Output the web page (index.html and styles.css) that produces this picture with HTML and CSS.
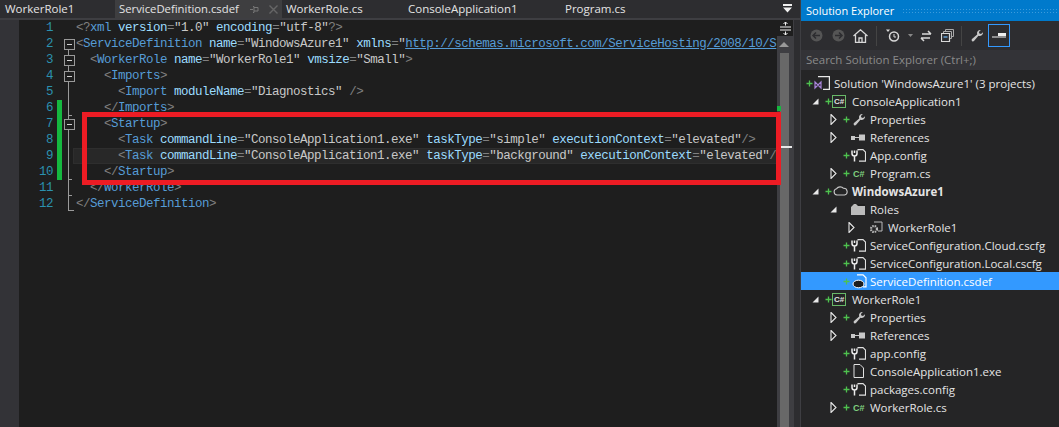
FILE: index.html
```html
<!DOCTYPE html>
<html lang="en">
<head>
<meta charset="utf-8">
<title>Solution Explorer</title>
<link rel="stylesheet" href="styles.css">
</head>
<body>
<svg class="defs" width="0" height="0" aria-hidden="true">
  <defs>
    <symbol id="plus" viewBox="0 0 7 7"><path d="M3.500 0.500v6M0.500 3.500h6" stroke="#4ec24e" stroke-width="1.300" fill="none"/></symbol>
    <symbol id="open" viewBox="0 0 7 7"><path d="M6.500 0.500v6h-6z" fill="#e8e8e8"/></symbol>
    <symbol id="closed" viewBox="0 0 7 11"><path d="M1 0.500l5 5-5 5z" fill="#1e1e1e" stroke="#e8e8e8" stroke-width="1.100"/></symbol>
    <symbol id="wrench" viewBox="0 0 13 13"><path d="M12 3.200a3.400 3.400 0 0 1-4.600 3.600L3 12a1.400 1.400 0 0 1-2-2l5.200-4.400A3.400 3.400 0 0 1 9.800 1L7.900 3l.5 1.600 1.600.5z" fill="#c8c8c8"/></symbol>
    <symbol id="refs" viewBox="0 0 14 7"><path d="M0 2h4v4H0zM8 .5h6v6H8z" fill="#c8c8c8"/><path d="M4 3.500h4" stroke="#c8c8c8"/></symbol>
    <symbol id="cfg" viewBox="0 0 15 13"><path d="M7 1.600V.600h5l2.500 2.500v9H8" fill="none" stroke="#e0e0e0" stroke-width="1.100"/><path d="M1 1.500v3a2.500 2.500 0 0 0 5 0v-3M3.500 7v5.500M3.500 1.500v2.500" fill="none" stroke="#ececec" stroke-width="1.500"/></symbol>
    <symbol id="cs" viewBox="0 0 15 10"><text x="0" y="8.500" font-family="Liberation Sans,sans-serif" font-size="9" font-weight="700" fill="#7fd07f">C#</text></symbol>
    <symbol id="file" viewBox="0 0 11 14"><path d="M1 .5h6l3.500 3.500v9.500H1z" fill="none" stroke="#e0e0e0"/></symbol>
    <symbol id="cloud" viewBox="0 0 15 10"><path d="M4 9a3.200 3.200 0 0 1-.4-6.300A4.500 4.500 0 0 1 10.500 2.300 3.400 3.400 0 0 1 11.500 9z" fill="none" stroke="#c8c8c8" stroke-width="1.100"/></symbol>
  </defs>
</svg>
<div class="app">
  <main class="doc">
    <div class="tabs">
      <span class="tab tab-a">WorkerRole1</span>
      <span class="tab tab-active"><span class="tab-name">ServiceDefinition.csdef</span>
        <svg class="pin" width="9" height="9" viewBox="0 0 9 9"><path d="M0 4.500h3M3 1.500h1v6H3M4 2.500h4v3.500H4" fill="none" stroke="#777"/></svg>
        <svg class="close" width="9" height="9" viewBox="0 0 9 9"><path d="M.5.500l8 8M8.500.500l-8 8" stroke="#666" stroke-width="1.400"/></svg>
      </span>
      <span class="tab tab-c">WorkerRole.cs</span>
      <span class="tab tab-d">ConsoleApplication1</span>
      <span class="tab tab-e">Program.cs</span>
      <svg class="overflow" width="9" height="9" viewBox="0 0 9 9"><path d="M0 0h9v2H0zM0 3.500h9L4.500 8.500z" fill="#f0f0f0"/></svg>
    </div>
    <div class="body">
      <div class="editor">
        <div class="rows">
          <div class="row"><span class="num">1</span><span class="bar"></span><span class="fold"></span><code class="code"><i class="p">&lt;?</i><i class="n">xml</i> <i class="a">version</i><i class="p">=</i><i class="v">"1.0"</i> <i class="a">encoding</i><i class="p">=</i><i class="v">"utf-8"</i><i class="p">?&gt;</i></code></div>
          <div class="row"><span class="num">2</span><span class="bar"></span><span class="fold f-box f-down"></span><code class="code"><i class="p">&lt;</i><i class="n">ServiceDefinition</i> <i class="a">name</i><i class="p">=</i><i class="v">"WindowsAzure1"</i> <i class="a">xmlns</i><i class="p">=</i><i class="v">"</i><i class="l">http://schemas.microsoft.com/ServiceHosting/2008/10/S</i></code></div>
          <div class="row"><span class="num">3</span><span class="bar"></span><span class="fold f-box f-line"></span><code class="code">  <i class="p">&lt;</i><i class="n">WorkerRole</i> <i class="a">name</i><i class="p">=</i><i class="v">"WorkerRole1"</i> <i class="a">vmsize</i><i class="p">=</i><i class="v">"Small"</i><i class="p">&gt;</i></code></div>
          <div class="row"><span class="num">4</span><span class="bar"></span><span class="fold f-box f-line"></span><code class="code">    <i class="p">&lt;</i><i class="n">Imports</i><i class="p">&gt;</i></code></div>
          <div class="row"><span class="num">5</span><span class="bar"></span><span class="fold f-line"></span><code class="code">      <i class="p">&lt;</i><i class="n">Import</i> <i class="a">moduleName</i><i class="p">=</i><i class="v">"Diagnostics"</i> <i class="p">/&gt;</i></code></div>
          <div class="row"><span class="num">6</span><span class="bar on"></span><span class="fold f-line f-tick"></span><code class="code">    <i class="p">&lt;/</i><i class="n">Imports</i><i class="p">&gt;</i></code></div>
          <div class="row"><span class="num">7</span><span class="bar on"></span><span class="fold f-box f-line"></span><code class="code">    <i class="p">&lt;</i><i class="n">Startup</i><i class="p">&gt;</i></code></div>
          <div class="row"><span class="num">8</span><span class="bar on"></span><span class="fold f-line"></span><code class="code">      <i class="p">&lt;</i><i class="n">Task</i> <i class="a">commandLine</i><i class="p">=</i><i class="v">"ConsoleApplication1.exe"</i> <i class="a">taskType</i><i class="p">=</i><i class="v">"simple"</i> <i class="a">executionContext</i><i class="p">=</i><i class="v">"elevated"</i><i class="p">/&gt;</i></code></div>
          <div class="row"><span class="num">9</span><span class="bar on"></span><span class="fold f-line"></span><code class="code current">      <i class="p">&lt;</i><i class="n">Task</i> <i class="a">commandLine</i><i class="p">=</i><i class="v">"ConsoleApplication1.exe"</i> <i class="a">taskType</i><i class="p">=</i><i class="v">"background"</i> <i class="a">executionContext</i><i class="p">=</i><i class="v">"elevated"</i><i class="p">/</i></code></div>
          <div class="row"><span class="num">10</span><span class="bar on"></span><span class="fold f-line f-tick"></span><code class="code">    <i class="p">&lt;/</i><i class="n">Startup</i><i class="p">&gt;</i></code></div>
          <div class="row"><span class="num">11</span><span class="bar"></span><span class="fold f-line f-tick"></span><code class="code">  <i class="p">&lt;/</i><i class="n">WorkerRole</i><i class="p">&gt;</i></code></div>
          <div class="row"><span class="num">12</span><span class="bar"></span><span class="fold f-end"></span><code class="code"><i class="p">&lt;/</i><i class="n">ServiceDefinition</i><i class="p">&gt;</i></code></div>
        </div>
        <div class="callout"></div>
      </div>
      <div class="scroll">
        <div class="split"><svg width="11" height="13" viewBox="0 0 11 13"><path d="M5.500 0v3.500M5.500 9.500V13M0 5h11M0 8h11M3.500 2L5.500 0l2 2M3.500 11l2 2 2-2" fill="none" stroke="#f0f0f0"/></svg></div>
        <div class="arrow"></div>
        <div class="thumb"><span class="mark-green"></span><span class="mark-white"></span></div>
      </div>
    </div>
  </main>
  <div class="gutter"></div>
  <aside class="side">
    <header class="title"><span>Solution Explorer</span><span class="grip"></span></header>
    <div class="tools">
      <svg class="t-back" width="13" height="13" viewBox="0 0 13 13"><circle cx="6.500" cy="6.500" r="6" fill="#555"/><path d="M10 6.500H3.500M6 3.500l-3 3 3 3" fill="none" stroke="#2d2d30" stroke-width="1.500"/></svg>
      <svg class="t-fwd" width="13" height="13" viewBox="0 0 13 13"><circle cx="6.500" cy="6.500" r="6" fill="#555"/><path d="M3 6.500h6.500M7 3.500l3 3-3 3" fill="none" stroke="#2d2d30" stroke-width="1.500"/></svg>
      <svg class="t-home" width="15" height="14" viewBox="0 0 15 14"><path d="M.5 7L7.500 .8 14.500 7M2.500 6v7.500h10V6M6 13.500V9h3v4.500" fill="none" stroke="#d8d8d8" stroke-width="1.300"/></svg>
      <span class="t-sep"></span>
      <svg class="t-hist" width="14" height="13" viewBox="0 0 14 13"><path d="M0 .5h4L2 3z" fill="#d8d8d8"/><circle cx="8" cy="7.500" r="4.500" fill="none" stroke="#d8d8d8" stroke-width="1.500"/><path d="M8 5v3h2" fill="none" stroke="#d8d8d8"/></svg>
      <svg class="t-drop" width="5" height="3" viewBox="0 0 5 3"><path d="M0 0h5L2.500 3z" fill="#888"/></svg>
      <svg class="t-sync" width="12" height="12" viewBox="0 0 12 12"><path d="M2 4h9M8 1l3 3M10 8H1M4 11L1 8" fill="none" stroke="#d8d8d8" stroke-width="1.500"/></svg>
      <svg class="t-copy" width="13" height="13" viewBox="0 0 13 13"><path d="M.500 4.500h8v8h-8z" fill="none" stroke="#d8d8d8" stroke-width="1.200"/><path d="M2.500 4V2.500h8v7H9M4.500 2V.500h8v7H11" fill="none" stroke="#aaa"/><path d="M2.500 8h4" stroke="#6cb4ee" stroke-width="1.300"/></svg>
      <span class="t-sep t-sep2"></span>
      <svg class="t-wrench" width="13" height="13"><use href="#wrench"/></svg>
      <span class="t-pin"><svg width="14" height="5" viewBox="0 0 14 5"><path d="M0 4h14" stroke="#eee"/><path d="M6 0h8v3H6z" fill="#eee"/></svg></span>
    </div>
    <div class="search">Search Solution Explorer (Ctrl+;)</div>
    <ul class="tree">
      <li class="node lv0"><svg class="pl" width="7" height="7"><use href="#plus"/></svg><span class="slot"><svg width="16" height="14" viewBox="0 0 16 14"><path d="M4 .6h11.400v12.800H9" fill="none" stroke="#e8e8e8" stroke-width="1.200"/><path d="M1 6l3 3 3-3v6l-3-3-3 3z" fill="none" stroke="#a884d8" stroke-width="1.200"/></svg></span><span>Solution 'WindowsAzure1' (3 projects)</span></li>
      <li class="node lv1"><svg class="exp" width="7" height="7"><use href="#open"/></svg><svg class="pl" width="7" height="7"><use href="#plus"/></svg><span class="slot"><span class="proj">C#</span></span><span>ConsoleApplication1</span></li>
      <li class="node lv2"><svg class="exp" width="7" height="11"><use href="#closed"/></svg><svg class="pl" width="7" height="7"><use href="#plus"/></svg><span class="slot in2"><svg width="13" height="13"><use href="#wrench"/></svg></span><span>Properties</span></li>
      <li class="node lv2"><svg class="exp" width="7" height="11"><use href="#closed"/></svg><span class="pl"></span><span class="slot in1"><svg width="14" height="7"><use href="#refs"/></svg></span><span>References</span></li>
      <li class="node lv2"><span class="exp"></span><svg class="pl" width="7" height="7"><use href="#plus"/></svg><span class="slot in1"><svg width="15" height="13"><use href="#cfg"/></svg></span><span>App.config</span></li>
      <li class="node lv2"><svg class="exp" width="7" height="11"><use href="#closed"/></svg><svg class="pl" width="7" height="7"><use href="#plus"/></svg><span class="slot in2"><svg width="15" height="10"><use href="#cs"/></svg></span><span>Program.cs</span></li>
      <li class="node lv1"><svg class="exp" width="7" height="7"><use href="#open"/></svg><svg class="pl" width="7" height="7"><use href="#plus"/></svg><span class="slot in1"><svg width="15" height="10"><use href="#cloud"/></svg></span><b>WindowsAzure1</b></li>
      <li class="node lv2"><svg class="exp" width="7" height="7"><use href="#open"/></svg><span class="pl"></span><span class="slot in1"><svg width="14" height="12" viewBox="0 0 14 12"><path d="M0 4l3-3h4v2h7v9H0z" fill="#bbb"/><path d="M5 1h9v2H7z" fill="#1e1e1e"/></svg></span><span>Roles</span></li>
      <li class="node lv3"><svg class="exp" width="7" height="11"><use href="#closed"/></svg><span class="pl"></span><span class="slot in1"><svg width="14" height="13" viewBox="0 0 14 13"><path d="M5 1h8v9H9" fill="none" stroke="#bbb"/><circle cx="5" cy="8" r="3" fill="none" stroke="#bbb" stroke-width="2.200" stroke-dasharray="1.500 .9"/></svg></span><span>WorkerRole1</span></li>
      <li class="node lv2"><span class="exp"></span><svg class="pl" width="7" height="7"><use href="#plus"/></svg><span class="slot in1"><svg width="15" height="13"><use href="#cfg"/></svg></span><span>ServiceConfiguration.Cloud.cscfg</span></li>
      <li class="node lv2"><span class="exp"></span><svg class="pl" width="7" height="7"><use href="#plus"/></svg><span class="slot in1"><svg width="15" height="13"><use href="#cfg"/></svg></span><span>ServiceConfiguration.Local.cscfg</span></li>
      <li class="node lv2 selected"><span class="exp"></span><svg class="pl" width="7" height="7"><use href="#plus"/></svg><span class="slot in1"><svg width="16" height="15" viewBox="0 0 16 15"><path d="M6 .8h6l3 3v9h-3" fill="none" stroke="#fff" stroke-width="1.200"/><ellipse cx="7.500" cy="10" rx="5.500" ry="3.800" fill="#1e1e1e" stroke="#fff"/></svg></span><span>ServiceDefinition.csdef</span></li>
      <li class="node lv1"><svg class="exp" width="7" height="7"><use href="#open"/></svg><svg class="pl" width="7" height="7"><use href="#plus"/></svg><span class="slot"><span class="proj">C#</span></span><span>WorkerRole1</span></li>
      <li class="node lv2"><svg class="exp" width="7" height="11"><use href="#closed"/></svg><svg class="pl" width="7" height="7"><use href="#plus"/></svg><span class="slot in2"><svg width="13" height="13"><use href="#wrench"/></svg></span><span>Properties</span></li>
      <li class="node lv2"><svg class="exp" width="7" height="11"><use href="#closed"/></svg><span class="pl"></span><span class="slot in1"><svg width="14" height="7"><use href="#refs"/></svg></span><span>References</span></li>
      <li class="node lv2"><span class="exp"></span><svg class="pl" width="7" height="7"><use href="#plus"/></svg><span class="slot in1"><svg width="15" height="13"><use href="#cfg"/></svg></span><span>app.config</span></li>
      <li class="node lv2"><span class="exp"></span><svg class="pl" width="7" height="7"><use href="#plus"/></svg><span class="slot in2"><svg width="11" height="14"><use href="#file"/></svg></span><span>ConsoleApplication1.exe</span></li>
      <li class="node lv2"><span class="exp"></span><svg class="pl" width="7" height="7"><use href="#plus"/></svg><span class="slot in1"><svg width="15" height="13"><use href="#cfg"/></svg></span><span>packages.config</span></li>
      <li class="node lv2"><svg class="exp" width="7" height="11"><use href="#closed"/></svg><svg class="pl" width="7" height="7"><use href="#plus"/></svg><span class="slot in2"><svg width="15" height="10"><use href="#cs"/></svg></span><span>WorkerRole.cs</span></li>
    </ul>
  </aside>
</div>
</body>
</html>
```
FILE: styles.css
```css
* { box-sizing: border-box; }
html, body { margin: 0; height: 100%; overflow: hidden; background: #2d2d30; }
.defs { position: absolute; }
.app {
  display: flex;
  width: 1059px;
  height: 427px;
  font-family: "Open Sans", "Noto Sans", sans-serif;
  font-size: 11.5px;
  color: #e4e4e4;
}
.doc { width: 800px; display: flex; flex-direction: column; flex: none; }
.tabs {
  height: 18px;
  flex: none;
  display: flex;
  align-items: center;
  position: relative;
  background: #2d2d30;
}
.tab { height: 18px; line-height: 18px; flex: none; white-space: nowrap; }
.tab-a { width: 115px; padding-left: 5px; }
.tab-active {
  width: 167px;
  padding-left: 4px;
  background: #3e3e40;
  display: flex;
  align-items: center;
}
.tab-name { width: 131px; font-size: 11.3px; }
.close { margin-left: 10px; }
.tab-c { width: 122px; padding-left: 4px; }
.tab-d { width: 157px; padding-left: 4px; }
.tab-e { width: 100px; padding-left: 4px; }
.overflow { position: absolute; left: 783px; top: 4px; }
.body { flex: 1; display: flex; min-height: 0; border-top: 2px solid #3e3e42; }
.editor {
  width: 777px;
  position: relative;
  background: #1e1e1e;
  border-left: 19px solid #333337;
}
.rows { display: flex; flex-direction: column; }
.row { display: flex; height: 16px; align-items: stretch; }
.num {
  width: 34px;
  text-align: right;
  color: #2b91af;
  font: 12.5px/16px "Liberation Mono", monospace;
  letter-spacing: -0.5px;
}
.bar { width: 5px; margin-left: 4px; }
.bar.on { background: #15b83f; }
.fold { width: 14px; position: relative; flex: none; }
.f-line::before, .f-down::before, .f-end::before {
  content: "";
  position: absolute;
  left: 6px;
  top: 0;
  bottom: 0;
  border-left: 1px solid #9a9a9a;
}
.f-down::before { top: 8px; }
.f-end::before { bottom: 1px; width: 5px; border-bottom: 1px solid #9a9a9a; }
.f-tick::after {
  content: "";
  position: absolute;
  left: 6px;
  bottom: 0;
  width: 4px;
  border-bottom: 1px solid #9a9a9a;
}
.f-box::after {
  content: "";
  position: absolute;
  left: 2px;
  top: 3px;
  width: 9px;
  height: 9px;
  border: 1px solid #9a9a9a;
  background: linear-gradient(#d0d0d0, #d0d0d0) center / 5px 1px no-repeat #1e1e1e;
}
.code {
  flex: 1;
  min-width: 0;
  overflow: hidden;
  white-space: pre;
  font: 12.5px/16px "Liberation Mono", monospace;
  letter-spacing: -0.5px;
  color: #c8c8c8;
}
.code i { font-style: normal; }
.current { background: #282828; box-shadow: inset 0 0 0 1px #2e2e2e; margin-left: -3px; padding-left: 3px; }
.p { color: #808080; }
.n { color: #569cd6; }
.a { color: #9cdcfe; }
.v { color: #c8c8c8; }
.l { color: #569cd6; text-decoration: underline; }
.callout {
  position: absolute;
  z-index: 2;
  left: 63px;
  top: 92px;
  width: 699px;
  height: 73px;
  border: 5px solid #ed1c24;
}
.scroll {
  width: 17px;
  flex: none;
  background: #3e3e42;
  display: flex;
  flex-direction: column;
  align-items: center;
  margin-right: 6px;
}
.split {
  width: 16px;
  height: 16px;
  background: #1e1e1e;
  display: flex;
  align-items: center;
  justify-content: center;
  margin-left: -1px;
}
.arrow {
  width: 0;
  height: 0;
  margin: 6px 0 6px -3px;
  border: 5px solid transparent;
  border-top: 0;
  border-bottom-color: #999;
}
.thumb {
  flex: 1;
  width: 9px;
  margin-left: -3px;
  background: #686868;
  position: relative;
}
.mark-green { position: absolute; left: -3px; top: 53px; width: 4px; height: 5px; background: #15b83f; }
.mark-white { position: absolute; left: 0; top: 93px; width: 12px; height: 2px; background: #e8e8e8; }
.gutter { width: 1px; background: #3e3e42; flex: none; }
.side {
  flex: 1;
  min-width: 0;
  display: flex;
  flex-direction: column;
  background: #252526;
}
.title {
  height: 21px;
  flex: none;
  background: #007acc;
  color: #fff;
  font-size: 11px;
  line-height: 21px;
  padding-left: 5px;
  display: flex;
  align-items: center;
  gap: 8px;
}
.grip {
  flex: 1;
  height: 5px;
  background: radial-gradient(circle, #3b9bdc 0.7px, transparent 0.8px) 0 0 / 3px 3px;
}
.tools {
  height: 29px;
  flex: none;
  background: #2d2d30;
  display: flex;
  align-items: center;
  padding-left: 9px;
}
.t-fwd { margin-left: 9px; }
.t-home { margin-left: 8px; }
.t-sep { width: 1px; height: 20px; background: #444; margin-left: 8px; }
.t-hist { margin-left: 9px; }
.t-drop { margin-left: 8px; }
.t-sync { margin-left: 7px; }
.t-copy { margin-left: 9px; }
.t-sep2 { margin-left: 7px; }
.t-wrench { margin-left: 9px; }
.t-pin {
  width: 22px;
  height: 23px;
  margin-left: 4px;
  border: 1px solid #3399ff;
  display: flex;
  align-items: center;
  justify-content: center;
}
.search {
  height: 20px;
  flex: none;
  background: #333337;
  color: #8a8a8a;
  line-height: 20px;
  padding-left: 5px;
}
.tree { list-style: none; margin: 0; padding: 4px 0 0; flex: 1; background: #252526; }
.node { height: 18px; display: flex; align-items: center; white-space: nowrap; }
.exp { width: 7px; flex: none; }
.pl { width: 7px; flex: none; margin-left: 6px; }
.slot { width: 20px; flex: none; display: flex; align-items: center; }
.in1 { padding-left: 1px; }
.in2 { padding-left: 3px; }
.lv0 { padding-left: 5px; }
.lv0 .pl { margin: 0 1px 0 0; }
.lv1 { padding-left: 11px; }
.lv2 { padding-left: 29px; }
.lv3 { padding-left: 47px; }
.proj {
  width: 14px;
  height: 13px;
  border: 1px solid #68b868;
  font: 700 8px/11px "Liberation Sans", sans-serif;
  text-align: center;
  color: #e0e0e0;
}
.selected { background: #3399ff; color: #fff; }
```
